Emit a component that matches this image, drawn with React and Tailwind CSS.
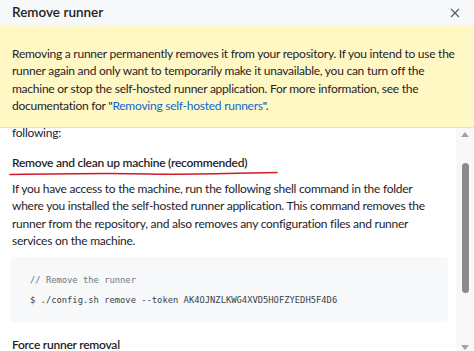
import React from "react";

function Scrollbar() {
	return (
		<div className="flex w-[18px] shrink-0 flex-col items-center bg-[#f8f8f8]">
			<div className="mt-[4px] h-0 w-0 border-x-[4px] border-b-[5px] border-x-transparent border-b-[#a3a3a3]" />
			<div className="mt-[26px] h-[130px] w-[7px] rounded-full bg-[#8b8b8b]" />
			<div className="flex-1" />
			<div className="mb-[1px] h-0 w-0 border-x-[4px] border-t-[5px] border-x-transparent border-t-[#a3a3a3]" />
		</div>
	);
}

export default function App() {
	return (
		<div
			className="flex h-[351px] w-[474px] flex-col overflow-hidden bg-white text-[#1f2328]"
			style={{ fontFamily: 'Lato, "Noto Sans", sans-serif' }}
		>
			{/* header */}
			<div className="flex h-[25px] shrink-0 items-center justify-between bg-[#f6f8fa] pl-[12px] pr-[14px]">
				<p className="text-[13.5px] font-semibold">Remove runner</p>
				<svg width="10" height="10" viewBox="0 0 10 10" className="text-[#57606a]">
					<path d="M1 1 L9 9 M9 1 L1 9" stroke="currentColor" strokeWidth="1.2" />
				</svg>
			</div>

			{/* warning banner */}
			<div className="h-[103px] shrink-0 border-b border-[#eee3b0] bg-[#fff8c5] px-[12px] pt-[20px] text-[12px] leading-[17.4px] tracking-[-0.25px] whitespace-nowrap">
				<p>
					Removing a runner permanently removes it from your repository. If you intend to use the
					<br />
					runner again and only want to temporarily make it unavailable, you can turn off the
					<br />
					machine or stop the self-hosted runner application. For more information, see the
					<br />
					documentation for "<span className="text-[#0969da]">Removing self-hosted runners</span>".
				</p>
			</div>

			{/* scrolled body */}
			<div className="flex min-h-0 flex-1">
				<div className="min-w-0 flex-1 overflow-hidden">
					<div className="-mt-[4px] pl-[11px] pr-[2px] text-[12px] leading-[17.4px] tracking-[-0.25px] whitespace-nowrap">
						<p className="pl-[1px]">following:</p>

						<div className="relative mt-[13px]">
							<p className="pl-[1px] font-semibold">Remove and clean up machine (recommended)</p>
							<svg
								className="absolute left-[-2px] top-[17px]"
								width="272"
								height="6"
								viewBox="0 0 272 6"
							>
								<path
									d="M1 3.5 C 60 2.5, 110 2, 140 3 S 230 2, 268 1.5"
									stroke="#d11a2a"
									strokeWidth="1.6"
									fill="none"
									strokeLinecap="round"
								/>
							</svg>
						</div>

						<p className="mt-[8px] pl-[1px]">
							If you have access to the machine, run the following shell command in the folder
							<br />
							where you installed the self-hosted runner application. This command removes the
							<br />
							runner from the repository, and also removes any configuration files and runner
							<br />
							services on the machine.
						</p>

						<div
							className="mt-[8px] mr-[6px] h-[65px] rounded-[3px] bg-[#f6f8fa] pl-[19px] pt-[13px] text-[8.8px] leading-[20px] tracking-normal"
							style={{ fontFamily: '"DejaVu Sans Mono", "Liberation Mono", monospace' }}
						>
							<p className="text-[#6e7781]">// Remove the runner</p>
							<p className="text-[#3b4249]">$ ./config.sh remove --token AK4OJNZLKWG4XVD5HOFZYEDH5F4D6</p>
						</div>

						<p className="mt-[14px] pl-[1px] font-semibold">Force runner removal</p>
					</div>
				</div>
				<Scrollbar />
			</div>
		</div>
	);
}
